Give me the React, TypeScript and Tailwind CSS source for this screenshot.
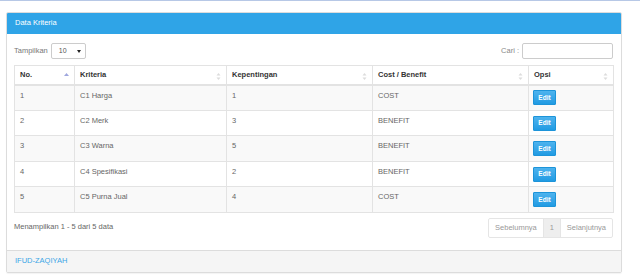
import React from "react";

const rows = [
  { no: 1, nama: "C1 Harga", kep: 1, tipe: "COST" },
  { no: 2, nama: "C2 Merk", kep: 3, tipe: "BENEFIT" },
  { no: 3, nama: "C3 Warna", kep: 5, tipe: "BENEFIT" },
  { no: 4, nama: "C4 Spesifikasi", kep: 2, tipe: "BENEFIT" },
  { no: 5, nama: "C5 Purna Jual", kep: 4, tipe: "COST" },
];

const rowHeights = ["h-[26px]", "h-[25px]", "h-[26px]", "h-[25px]", "h-[26px]"];

function SortIcon({ active }: { active?: boolean }) {
  if (active) {
    return (
      <svg width="5" height="9" viewBox="0 0 5 9" className="absolute right-[5px] top-[6px]">
        <path d="M0 4 L2.5 1 L5 4 Z" fill="#9fa7de" />
      </svg>
    );
  }
  return (
    <svg width="5" height="9" viewBox="0 0 5 9" className="absolute right-[5px] top-[6px]">
      <path d="M0.5 3.6 L2.5 1 L4.5 3.6 Z" fill="#dcdcdc" />
      <path d="M0.5 5.4 L2.5 8 L4.5 5.4 Z" fill="#dcdcdc" />
    </svg>
  );
}

function Th({ children, w, active }: { children: React.ReactNode; w: string; active?: boolean }) {
  return (
    <th className={`${w} relative h-[19px] border border-b-2 border-[#e3e3e3] pl-[5px] text-left font-bold text-[#333]`}>
      {children}
      <SortIcon active={active} />
    </th>
  );
}

export default function App() {
  return (
    <div className="min-h-[280px] bg-white font-['Liberation_Sans',Arial,sans-serif] text-[7.5px] leading-[1.4] text-[#666]">
      <div className="h-px bg-[#b7c8e6]" />
      <div className="pl-[6px] pt-[11px]">
        <div className="w-[616px] overflow-hidden rounded-[2px] border border-[#dcdcdc] shadow-[0_1px_1px_rgba(0,0,0,0.05)]">
          <div className="flex h-[21px] items-center bg-[#2fa4e7] px-[8px] text-white">Data Kriteria</div>

          <div className="pb-[12px] pl-[7px] pr-[8px] pt-[9px]">
            <div className="flex h-[16px] items-center justify-between">
              <div className="flex items-center gap-[3px] text-[#777]">
                <span>Tampilkan</span>
                <div className="flex h-[16px] w-[35px] items-center justify-between rounded-[2px] border border-[#ccc] pl-[7px] pr-[4px] text-[#555]">
                  <span className="text-[7px]">10</span>
                  <svg width="4" height="3" viewBox="0 0 4 3">
                    <path d="M0 0 L4 0 L2 3 Z" fill="#222" />
                  </svg>
                </div>
              </div>
              <div className="flex items-center gap-[3px] text-[#888]">
                <span>Cari :</span>
                <div className="h-[16px] w-[91px] rounded-[2px] border border-[#ccc] bg-white" />
              </div>
            </div>

            <table className="mt-[6px] w-[599px] table-fixed border-collapse">
              <thead>
                <tr>
                  <Th w="w-[60px]" active>No.</Th>
                  <Th w="w-[152px]">Kriteria</Th>
                  <Th w="w-[146px]">Kepentingan</Th>
                  <Th w="w-[156px]">Cost / Benefit</Th>
                  <Th w="w-[85px]">Opsi</Th>
                </tr>
              </thead>
              <tbody>
                {rows.map((r, i) => (
                  <tr key={r.no} className={i % 2 === 0 ? "bg-[#f9f9f9]" : "bg-white"}>
                    <td className={`${rowHeights[i]} border border-[#e3e3e3] pl-[5px] pt-[5px] align-top`}>{r.no}</td>
                    <td className="border border-[#e3e3e3] pl-[5px] pt-[5px] align-top">{r.nama}</td>
                    <td className="border border-[#e3e3e3] pl-[5px] pt-[5px] align-top">{r.kep}</td>
                    <td className="border border-[#e3e3e3] pl-[5px] pt-[5px] align-top">{r.tipe}</td>
                    <td className="border border-[#e3e3e3] pl-[4px] align-middle">
                      <button className="flex h-[15px] w-[23px] items-center justify-center rounded-[1px] border border-[#1d94d9] bg-gradient-to-b from-[#4db3ee] to-[#1f9be3] text-[6.5px] font-bold text-white">
                        Edit
                      </button>
                    </td>
                  </tr>
                ))}
              </tbody>
            </table>

            <div className="mt-[5px] flex items-start justify-between">
              <div className="pt-[4px] text-[#666]">Menampilkan 1 - 5 dari 5 data</div>
              <div className="flex h-[20px] overflow-hidden rounded-[2px] border border-[#e5e5e5] text-[#999]">
                <div className="flex items-center px-[6px]">Sebelumnya</div>
                <div className="flex w-[18px] items-center justify-center border-x border-[#e5e5e5] bg-[#eee]">1</div>
                <div className="flex items-center px-[6px]">Selanjutnya</div>
              </div>
            </div>
          </div>

          <div className="flex h-[22px] items-center border-t border-[#dcdcdc] bg-[#f5f5f5] px-[8px] text-[#3aa5e6]">IFUD-ZAQIYAH</div>
        </div>
      </div>
    </div>
  );
}
